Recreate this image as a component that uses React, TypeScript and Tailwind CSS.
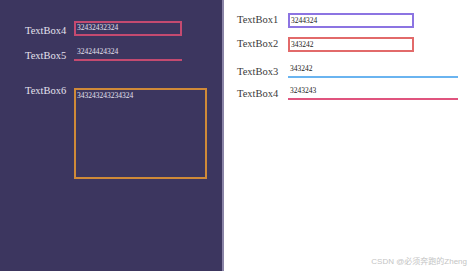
import React from "react";

const serif = { fontFamily: '"Liberation Serif", "DejaVu Serif", serif' };

export default function App() {
  return (
    <div className="flex h-[271px] w-[474px] overflow-hidden" style={serif}>
      {/* Left dark panel */}
      <div className="flex w-[222px] flex-col bg-[#3c365f] pl-[25px] pt-[21px] text-[#e4e1ee]">
        <div className="flex h-[15px] items-start">
          <span className="mt-[2px] w-[49px] text-[10.5px] leading-[15px]">TextBox4</span>
          <div className="h-[15px] w-[108px] border-2 border-[#c44a70] pl-[1px] text-[7.5px] leading-[10px]">
            32432432324
          </div>
        </div>
        <div className="mt-[9px] flex h-[16px] items-start">
          <span className="mt-[3px] w-[49px] text-[10.5px] leading-[15px]">TextBox5</span>
          <div className="h-[16px] w-[108px] border-b-2 border-[#c44a70] pl-[3px] pt-[2px] text-[7.5px] leading-[10px]">
            32424424324
          </div>
        </div>
        <div className="mt-[27px] flex items-start">
          <span className="-mt-[5px] w-[49px] text-[10.5px] leading-[15px]">TextBox6</span>
          <div className="h-[91px] w-[133px] border-2 border-[#d08a38] pl-[1px] pt-[1px] text-[7.5px] leading-[10px]">
            343243243234324
          </div>
        </div>
      </div>
      {/* Separator */}
      <div className="w-[2px] bg-[#8a84a6]" />
      {/* Right white panel */}
      <div className="relative flex flex-1 flex-col bg-white pl-[13px] pt-[13px] text-[#3a3a3a]">
        <div className="flex h-[15px] items-center">
          <span className="-mt-[2px] w-[51px] text-[10.5px] leading-[15px]">TextBox1</span>
          <div className="h-[15px] w-[126px] border-2 border-[#8c74e2] pl-[1px] text-[7.5px] leading-[11px] text-[#222]">
            3244324
          </div>
        </div>
        <div className="mt-[9px] flex h-[15px] items-center">
          <span className="-mt-[2px] w-[51px] text-[10.5px] leading-[15px]">TextBox2</span>
          <div className="h-[15px] w-[126px] border-2 border-[#e26a6a] pl-[1px] text-[7.5px] leading-[11px] text-[#222]">
            343242
          </div>
        </div>
        <div className="mt-[11px] flex h-[16px] items-start">
          <span className="mt-[1px] w-[51px] text-[10.5px] leading-[15px]">TextBox3</span>
          <div className="h-[15px] w-[170px] border-b-2 border-[#6ab4f0] pl-[2px] text-[7.5px] leading-[11px] text-[#222]">
            343242
          </div>
        </div>
        <div className="mt-[6px] flex h-[16px] items-start">
          <span className="mt-[1px] w-[51px] text-[10.5px] leading-[15px]">TextBox4</span>
          <div className="h-[15px] w-[170px] border-b-2 border-[#e0547e] pl-[2px] text-[7.5px] leading-[11px] text-[#222]">
            3243243
          </div>
        </div>
        <div
          className="absolute bottom-[3px] right-[7px] text-[8px] leading-[12px] text-[#c4c4c4]"
          style={{ fontFamily: '"Liberation Sans", "Noto Sans CJK SC", sans-serif' }}
        >
          CSDN @必须奔跑的Zheng
        </div>
      </div>
    </div>
  );
}
